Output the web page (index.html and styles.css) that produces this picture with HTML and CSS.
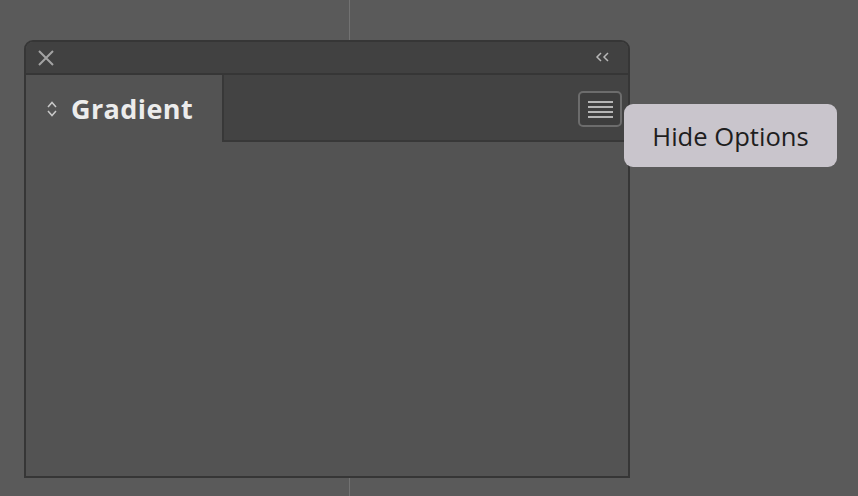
FILE: index.html
```html
<!DOCTYPE html>
<html>
<head>
<meta charset="utf-8">
<link rel="stylesheet" href="styles.css">
</head>
<body>
<div class="guide"></div>
<div class="canvas">
  <div class="panel">
    <div class="titlebar">
      <svg class="close" width="18" height="18" viewBox="0 0 18 18"><path d="M2 2 L16 16 M16 2 L2 16" stroke="#a3a3a3" stroke-width="2" fill="none"/></svg>
      <svg class="collapse" width="16" height="10" viewBox="0 0 16 10"><path d="M6 1 L2 5 L6 9 M13 1 L9 5 L13 9" stroke="#b8b8b8" stroke-width="1.5" fill="none"/></svg>
    </div>
    <div class="tabrow">
      <div class="tab">
        <svg class="updown" width="12" height="18" viewBox="0 0 12 18"><path d="M2 7 L6 2.5 L10 7 M2 11 L6 15.5 L10 11" stroke="#c8c8c8" stroke-width="1.5" fill="none"/></svg>
        <span class="tabtitle">Gradient</span>
      </div>
      <div class="tabfill">
        <div class="menubtn">
          <span></span><span></span><span></span><span></span>
        </div>
      </div>
    </div>
    <div class="body"></div>
  </div>
</div>
<div class="tooltip">Hide Options</div>
</body>
</html>
```
FILE: styles.css
```css
html, body {
  margin: 0;
  padding: 0;
  background: #5a5a5a;
  width: 858px;
  height: 496px;
  overflow: hidden;
  position: relative;
}
.guide {
  position: absolute;
  left: 349px;
  top: 0;
  width: 1px;
  height: 496px;
  background: #727272;
}
.canvas {
  padding: 40px 0 0 24px;
  position: relative;
}
.panel {
  width: 602px;
  height: 434px;
  border: 2px solid #363636;
  border-radius: 9px 9px 0 0;
  background: #535353;
  display: flex;
  flex-direction: column;
  overflow: hidden;
}
.titlebar {
  height: 31px;
  background: #414141;
  border-bottom: 2px solid #363636;
  display: flex;
  align-items: center;
  justify-content: space-between;
  padding: 0 17px 0 11px;
  flex: none;
}
.collapse { margin-top: -2px; }
.tabrow {
  height: 65px;
  display: flex;
  background: #434343;
  border-bottom: 2px solid #383838;
  flex: none;
}
.tab {
  width: 198px;
  background: #535353;
  border-right: 2px solid #383838;
  display: flex;
  align-items: center;
  padding-left: 20px;
  box-sizing: border-box;
  height: 67px;
}
.updown { margin-right: 13px; margin-top: 1px; }
.tabtitle {
  font-family: "Open Sans", sans-serif;
  font-weight: 700;
  font-size: 27px;
  color: #ececec;
  letter-spacing: 0.4px;
}
.tabfill {
  flex: 1;
  display: flex;
  justify-content: flex-end;
  padding: 16px 6px 0 0;
}
.menubtn {
  width: 40px;
  height: 32px;
  border: 2px solid #6c6c6c;
  border-radius: 5px;
  background: #3d3d3d;
  display: flex;
  flex-direction: column;
  align-items: center;
  justify-content: center;
  gap: 3px;
}
.menubtn span {
  display: block;
  width: 25px;
  height: 2px;
  background: #b5b5b5;
}
.body { flex: 1; }
.tooltip {
  position: absolute;
  left: 624px;
  top: 104px;
  width: 213px;
  height: 63px;
  box-sizing: border-box;
  background: #c9c5cc;
  border-radius: 9px;
  font-family: "Open Sans", sans-serif;
  font-size: 25.6px;
  color: #1e1e1e;
  display: flex;
  align-items: center;
  justify-content: center;
  padding-top: 2px;
}
```
